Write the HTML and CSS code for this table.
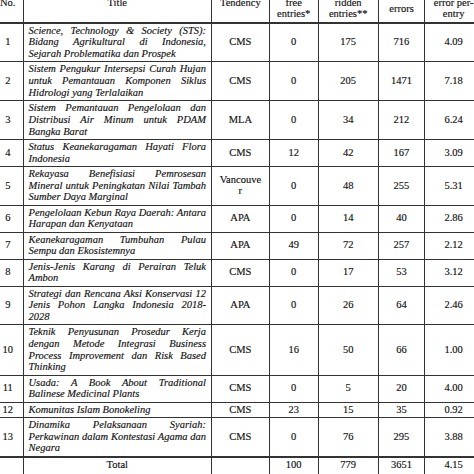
FILE: index.html
```
<!DOCTYPE html>
<html>
<head>
<meta charset="utf-8">
<link rel="stylesheet" href="styles.css">
</head>
<body>
<table class="tbl">
  <colgroup>
    <col class="c-no"><col class="c-title"><col class="c-tend"><col class="c-free"><col class="c-ridden"><col class="c-total"><col class="c-avg">
  </colgroup>
  <thead>
    <tr>
      <th>No.</th>
      <th>Title</th>
      <th>Tendency</th>
      <th>Error-<br>free<br>entries*</th>
      <th>Error-<br>ridden<br>entries**</th>
      <th>Total<br>errors</th>
      <th>Average<br>error per-<br>entry</th>
    </tr>
  </thead>
  <tbody>
    <tr><td>1</td><td class="t"><span class="ln">Science, Technology &amp; Society (STS):</span><span class="ln">Bidang Agrikultural di Indonesia,</span><span class="ln end">Sejarah Problematika dan Prospek</span></td><td>CMS</td><td>0</td><td>175</td><td>716</td><td>4.09</td></tr>
    <tr><td>2</td><td class="t"><span class="ln">Sistem Pengukur Intersepsi Curah Hujan</span><span class="ln">untuk Pemantauan Komponen Siklus</span><span class="ln end">Hidrologi yang Terlalaikan</span></td><td>CMS</td><td>0</td><td>205</td><td>1471</td><td>7.18</td></tr>
    <tr><td>3</td><td class="t"><span class="ln">Sistem Pemantauan Pengelolaan dan</span><span class="ln">Distribusi Air Minum untuk PDAM</span><span class="ln end">Bangka Barat</span></td><td>MLA</td><td>0</td><td>34</td><td>212</td><td>6.24</td></tr>
    <tr><td>4</td><td class="t"><span class="ln">Status Keanekaragaman Hayati Flora</span><span class="ln end">Indonesia</span></td><td>CMS</td><td>12</td><td>42</td><td>167</td><td>3.09</td></tr>
    <tr><td>5</td><td class="t"><span class="ln">Rekayasa Benefisiasi Pemrosesan</span><span class="ln">Mineral untuk Peningkatan Nilai Tambah</span><span class="ln end">Sumber Daya Marginal</span></td><td>Vancouve<br>r</td><td>0</td><td>48</td><td>255</td><td>5.31</td></tr>
    <tr><td>6</td><td class="t"><span class="ln">Pengelolaan Kebun Raya Daerah: Antara</span><span class="ln end">Harapan dan Kenyataan</span></td><td>APA</td><td>0</td><td>14</td><td>40</td><td>2.86</td></tr>
    <tr><td>7</td><td class="t"><span class="ln">Keanekaragaman Tumbuhan Pulau</span><span class="ln end">Sempu dan Ekosistemnya</span></td><td>APA</td><td>49</td><td>72</td><td>257</td><td>2.12</td></tr>
    <tr><td>8</td><td class="t"><span class="ln">Jenis-Jenis Karang di Perairan Teluk</span><span class="ln end">Ambon</span></td><td>CMS</td><td>0</td><td>17</td><td>53</td><td>3.12</td></tr>
    <tr><td>9</td><td class="t"><span class="ln">Strategi dan Rencana Aksi Konservasi 12</span><span class="ln">Jenis Pohon Langka Indonesia 2018-</span><span class="ln end">2028</span></td><td>APA</td><td>0</td><td>26</td><td>64</td><td>2.46</td></tr>
    <tr><td>10</td><td class="t"><span class="ln">Teknik Penyusunan Prosedur Kerja</span><span class="ln">dengan Metode Integrasi Business</span><span class="ln">Process Improvement dan Risk Based</span><span class="ln end">Thinking</span></td><td>CMS</td><td>16</td><td>50</td><td>66</td><td>1.00</td></tr>
    <tr><td>11</td><td class="t"><span class="ln">Usada: A Book About Traditional</span><span class="ln end">Balinese Medicinal Plants</span></td><td>CMS</td><td>0</td><td>5</td><td>20</td><td>4.00</td></tr>
    <tr><td>12</td><td class="t"><span class="ln end">Komunitas Islam Bonokeling</span></td><td>CMS</td><td>23</td><td>15</td><td>35</td><td>0.92</td></tr>
    <tr class="last"><td>13</td><td class="t"><span class="ln">Dinamika Pelaksanaan Syariah:</span><span class="ln">Perkawinan dalam Kontestasi Agama dan</span><span class="ln end">Negara</span></td><td>CMS</td><td>0</td><td>76</td><td>295</td><td>3.88</td></tr>
  </tbody>
  <tfoot>
    <tr><td></td><td>Total</td><td></td><td>100</td><td>779</td><td>3651</td><td>4.15</td></tr>
  </tfoot>
</table>
</body>
</html>
```
FILE: styles.css
```
html, body {
  margin: 0;
  padding: 0;
  background: #ffffff;
  overflow: hidden;
}

.tbl {
  margin: -17px 0 0 -8px;
  border-collapse: collapse;
  table-layout: fixed;
  width: 490px;
  font-family: "Liberation Serif", "Times New Roman", serif;
  font-size: 10.5px;
  line-height: 11.7px;
  color: #111111;
  -webkit-text-stroke: 0.15px #111111;
}

.c-no { width: 30.5px; }
.c-title { width: 188.5px; }
.c-tend { width: 57.7px; }
.c-free { width: 49px; }
.c-ridden { width: 60px; }
.c-total { width: 46.6px; }
.c-avg { width: 57.7px; }

.tbl th,
.tbl td {
  border: 1px solid #333333;
  padding: 1px 5px 1.6px;
  text-align: center;
  vertical-align: middle;
  font-weight: normal;
}

.tbl thead th {
  border-bottom: 2px solid #333333;
}

.tbl td.t {
  font-style: italic;
  padding-left: 5px;
  padding-right: 5px;
}

.ln {
  display: block;
  white-space: nowrap;
  text-align: justify;
  text-align-last: justify;
}

.ln.end {
  text-align: left;
  text-align-last: left;
}

.tbl tr.last td {
  border-bottom: 2px solid #333333;
}

.tbl tfoot td {
  padding-top: 1.5px;
  padding-bottom: 6px;
}
```
